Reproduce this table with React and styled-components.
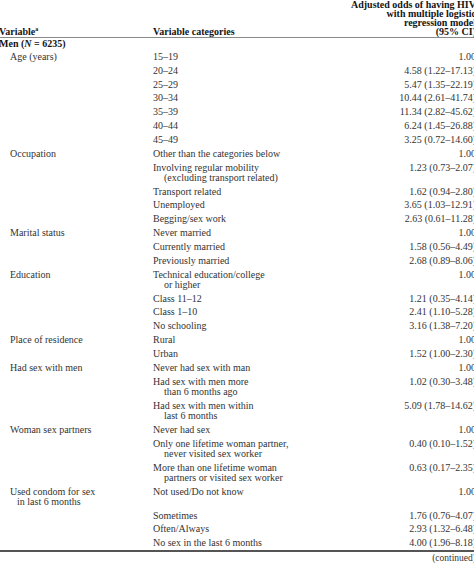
import React from "react";
import styled, { createGlobalStyle } from "styled-components";

const Global = createGlobalStyle`
  html, body {
    margin: 0;
    padding: 0;
    background: #fff;
    overflow: hidden;
  }
  body {
    width: 474px;
    height: 565px;
  }
`;

const Page = styled.div`
  width: 477px;
  margin-left: -1px;
  font-family: "Liberation Serif", "Times New Roman", serif;
  font-size: 10px;
  color: #333;
`;

const Table = styled.table`
  width: 100%;
  border-collapse: collapse;
  table-layout: fixed;
`;

const HeadCell = styled.th`
  font-weight: bold;
  color: #151515;
  line-height: 9px;
  padding: 0 0 1px;
  text-align: ${(p) => (p.$right ? "right" : "left")};
  vertical-align: bottom;
  border-bottom: 1px solid #8a8a8a;
`;

const Sup = styled.sup`
  font-size: 6px;
  line-height: 0;
`;

const SectionCell = styled.td`
  font-weight: bold;
  color: #151515;
  line-height: 10.2px;
  padding: 1.4px 0 0.6px;
`;

const Cell = styled.td`
  line-height: 10.2px;
  padding: 1.82px 0;
  vertical-align: top;
  text-align: ${(p) => (p.$right ? "right" : "left")};
  padding-left: ${(p) => (p.$indent ? "11px" : "0")};
  white-space: nowrap;
`;

const Hanging = styled.div`
  padding-left: ${(p) => p.$hang}px;
  text-indent: -${(p) => p.$hang}px;
`;

const Footer = styled.tr`
  td {
    padding: 0;
    height: 0;
    border-top: 2px solid #555;
  }
`;

const Continued = styled.div`
  text-align: right;
  font-size: 9.5px;
  line-height: 10px;
  padding-top: 1px;
`;

const groups = [
  {
    label: ["Age (years)"],
    rows: [
      [["15–19"], "1.00"],
      [["20–24"], "4.58 (1.22–17.13)"],
      [["25–29"], "5.47 (1.35–22.19)"],
      [["30–34"], "10.44 (2.61–41.74)"],
      [["35–39"], "11.34 (2.82–45.62)"],
      [["40–44"], "6.24 (1.45–26.88)"],
      [["45–49"], "3.25 (0.72–14.60)"],
    ],
  },
  {
    label: ["Occupation"],
    rows: [
      [["Other than the categories below"], "1.00"],
      [["Involving regular mobility", "(excluding transport related)"], "1.23 (0.73–2.07)"],
      [["Transport related"], "1.62 (0.94–2.80)"],
      [["Unemployed"], "3.65 (1.03–12.91)"],
      [["Begging/sex work"], "2.63 (0.61–11.28)"],
    ],
  },
  {
    label: ["Marital status"],
    rows: [
      [["Never married"], "1.00"],
      [["Currently married"], "1.58 (0.56–4.49)"],
      [["Previously married"], "2.68 (0.89–8.06)"],
    ],
  },
  {
    label: ["Education"],
    rows: [
      [["Technical education/college", "or higher"], "1.00"],
      [["Class 11–12"], "1.21 (0.35–4.14)"],
      [["Class 1–10"], "2.41 (1.10–5.28)"],
      [["No schooling"], "3.16 (1.38–7.20)"],
    ],
  },
  {
    label: ["Place of residence"],
    rows: [
      [["Rural"], "1.00"],
      [["Urban"], "1.52 (1.00–2.30)"],
    ],
  },
  {
    label: ["Had sex with men"],
    rows: [
      [["Never had sex with man"], "1.00"],
      [["Had sex with men more", "than 6 months ago"], "1.02 (0.30–3.48)"],
      [["Had sex with men within", "last 6 months"], "5.09 (1.78–14.62)"],
    ],
  },
  {
    label: ["Woman sex partners"],
    rows: [
      [["Never had sex"], "1.00"],
      [["Only one lifetime woman partner,", "never visited sex worker"], "0.40 (0.10–1.52)"],
      [["More than one lifetime woman", "partners or visited sex worker"], "0.63 (0.17–2.35)"],
    ],
  },
  {
    label: ["Used condom for sex", "in last 6 months"],
    rows: [
      [["Not used/Do not know"], "1.00"],
      [["Sometimes"], "1.76 (0.76–4.07)"],
      [["Often/Always"], "2.93 (1.32–6.48)"],
      [["No sex in the last 6 months"], "4.00 (1.96–8.18)"],
    ],
  },
];

const Lines = ({ lines, hang }) => (
  <Hanging $hang={hang}>
    {lines.map((l, i) => (
      <React.Fragment key={i}>
        {i > 0 && <br />}
        {l}
      </React.Fragment>
    ))}
  </Hanging>
);

export default function App() {
  return (
    <>
      <Global />
      <Page>
        <Table>
          <colgroup>
            <col style={{ width: "154px" }} />
            <col style={{ width: "190px" }} />
            <col />
          </colgroup>
          <thead>
            <tr>
              <HeadCell>
                Variable<Sup>a</Sup>
              </HeadCell>
              <HeadCell>Variable categories</HeadCell>
              <HeadCell $right>
                Adjusted odds of having HIV
                <br />
                with multiple logistic
                <br />
                regression model
                <br />
                (95% CI)
              </HeadCell>
            </tr>
          </thead>
          <tbody>
            <tr>
              <SectionCell colSpan={3}>
                Men (<i>N</i> = 6235)
              </SectionCell>
            </tr>
            {groups.map((g) =>
              g.rows.map(([cat, val], i) => (
                <tr key={g.label[0] + i}>
                  <Cell $indent>{i === 0 && <Lines lines={g.label} hang={7} />}</Cell>
                  <Cell>
                    <Lines lines={cat} hang={11} />
                  </Cell>
                  <Cell $right>{val}</Cell>
                </tr>
              ))
            )}
            <Footer>
              <td colSpan={3} />
            </Footer>
          </tbody>
        </Table>
        <Continued>(continued)</Continued>
      </Page>
    </>
  );
}
